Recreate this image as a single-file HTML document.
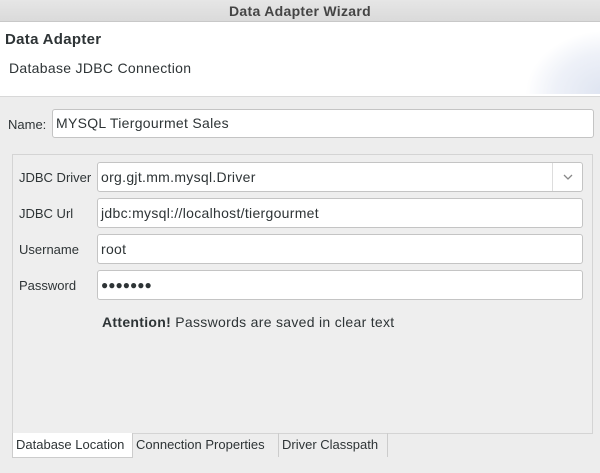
<!DOCTYPE html>
<html><head><style>
body{margin:0;width:600px;height:473px;background:#ededed;font-family:"Liberation Sans",sans-serif;font-size:14px;letter-spacing:0.3px;color:#2e3436;position:relative;overflow:hidden}
div{position:absolute;box-sizing:border-box;white-space:nowrap}
.title{left:0;top:0;width:600px;height:22px;background:linear-gradient(#e6e6e6,#dadada);border-bottom:1px solid #c8c8c8;text-align:center;line-height:22px;font-weight:bold;color:#444}
.head{left:0;top:22px;width:600px;height:75px;background:#fff;border-bottom:1px solid #d8d8d8}
.in{background:#fff;border:1px solid #c4c4c4;border-radius:3px;height:30px;line-height:28px;padding-left:3px;left:97px;width:486px}
.lab{left:19px;font-size:13px;letter-spacing:0}
.tab{font-size:13px;letter-spacing:0;padding:4px 0 0 3px}
</style></head><body>
<div class="title">Data Adapter Wizard</div>
<div class="head">
 <div style="left:5px;top:9px;font-weight:bold;font-size:15px">Data Adapter</div>
 <div style="left:9px;top:38px">Database JDBC Connection</div>
 <div style="right:0;top:8px;width:75px;height:64px;background:radial-gradient(ellipse at 110% 100%,#dde3f0 0%,#eef1f8 45%,#fff 70%)"></div>
</div>
<div style="left:8px;top:117px;font-size:13px;letter-spacing:0">Name:</div>
<div class="in" style="left:52px;top:109px;width:542px;height:29px;line-height:27px">MYSQL Tiergourmet Sales</div>
<div style="left:12px;top:154px;width:581px;height:280px;border:1px solid #d4d4d4;background:#eeeeee"></div>
<div class="lab" style="top:170px">JDBC Driver</div>
<div class="in" style="top:162px">org.gjt.mm.mysql.Driver
 <div style="right:0;top:0;width:30px;height:28px;border-left:1px solid #ddd"><svg width="30" height="28"><path d="M11 12l4 4 4-4" stroke="#888" fill="none" stroke-width="1.3"/></svg></div></div>
<div class="lab" style="top:206px">JDBC Url</div>
<div class="in" style="top:198px">jdbc:mysql://localhost/tiergourmet</div>
<div class="lab" style="top:242px">Username</div>
<div class="in" style="top:234px">root</div>
<div class="lab" style="top:278px">Password</div>
<div class="in" style="top:270px;font-size:12px;letter-spacing:0">●●●●●●●</div>
<div style="left:102px;top:314px"><b>Attention!</b> Passwords are saved in clear text</div>
<div class="tab" style="left:12px;top:433px;width:121px;height:25px;background:#fff;border:1px solid #ccc;border-top:none">Database Location</div>
<div class="tab" style="left:133px;top:433px;width:146px;height:24px;border-right:1px solid #ccc">Connection Properties</div>
<div class="tab" style="left:279px;top:433px;width:109px;height:24px;border-right:1px solid #ccc">Driver Classpath</div>
</body></html>
